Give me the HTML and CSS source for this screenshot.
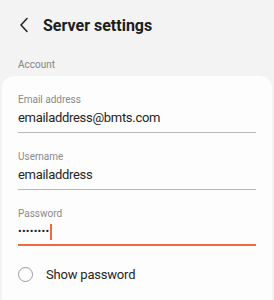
FILE: index.html
```html
<!DOCTYPE html>
<html>
<head>
<meta charset="utf-8">
<link rel="stylesheet" href="styles.css">
</head>
<body>
<div class="page">
  <header class="topbar">
    <svg class="back" width="10" height="16" viewBox="0 0 10 16"><path d="M8 1.5 L2 8 L8 14.5" fill="none" stroke="#222" stroke-width="1.5" stroke-linecap="round" stroke-linejoin="round"/></svg>
    <h1 class="title">Server settings</h1>
  </header>
  <div class="section">Account</div>
  <div class="card">
    <div class="field">
      <div class="label">Email address</div>
      <div class="value">emailaddress@bmts.com</div>
    </div>
    <div class="field">
      <div class="label">Username</div>
      <div class="value">emailaddress</div>
    </div>
    <div class="field active">
      <div class="label">Password</div>
      <div class="value"><span class="dots">••••••••</span><span class="caret"></span></div>
    </div>
    <div class="check">
      <span class="radio"></span>
      <span class="check-label">Show password</span>
    </div>
  </div>
</div>
</body>
</html>
```
FILE: styles.css
```css
html, body {
  margin: 0;
  padding: 0;
  background: #f3f3f3;
  font-family: Roboto, "Noto Sans", sans-serif;
}
.page {
  width: 274px;
  height: 300px;
  overflow: hidden;
}
.topbar {
  display: flex;
  align-items: center;
  height: 50px;
  padding-left: 19px;
}
.back {
  margin-right: 14px;
}
.title {
  margin: 0;
  font-size: 16px;
  font-weight: 700;
  color: #1c1c1c;
}
.section {
  padding: 9px 18px 0;
  font-size: 10px;
  color: #858585;
  height: 17px;
}
.card {
  margin: 0 2px;
  background: #fdfdfd;
  border-radius: 12px;
  padding: 17px 16px 0;
  height: 300px;
}
.field {
  width: 238px;
  border-bottom: 1px solid #b9b9b9;
  padding-bottom: 3px;
  margin-bottom: 17px;
}
.label {
  font-size: 10px;
  color: #8a8a8a;
  line-height: 14px;
}
.value {
  font-size: 13px;
  letter-spacing: -0.3px;
  color: #252525;
  line-height: 22px;
  display: flex;
  align-items: center;
}
.field.active {
  border-bottom: 2px solid #f4683a;
  padding-bottom: 1px;
}
.dots {
  font-size: 11px;
  letter-spacing: 0.2px;
  color: #222;
}
.caret {
  display: inline-block;
  width: 2px;
  height: 16px;
  background: #f4683a;
  margin-left: 1px;
}
.check {
  display: flex;
  align-items: center;
  margin-top: 21px;
}
.radio {
  width: 13px;
  height: 13px;
  border: 1.2px solid #9a9a9a;
  border-radius: 50%;
  margin-left: 0;
  margin-right: 13px;
}
.check-label {
  font-size: 13px;
  letter-spacing: -0.2px;
  color: #252525;
}
```
